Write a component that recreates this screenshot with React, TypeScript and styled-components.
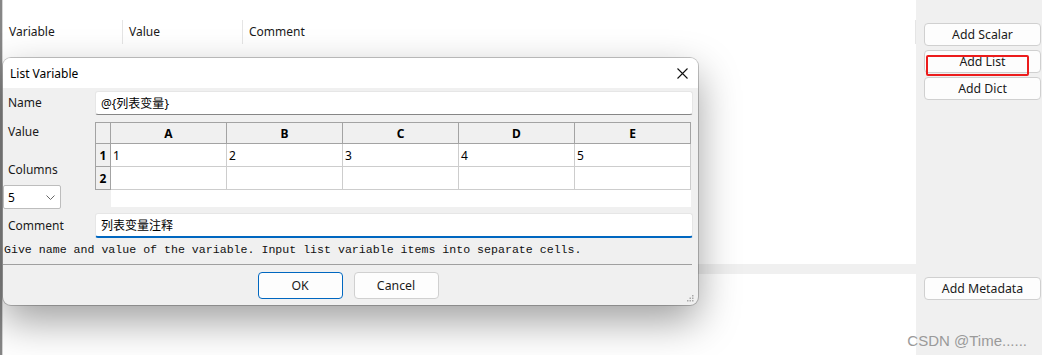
import React from 'react';
import styled, { createGlobalStyle } from 'styled-components';

const GlobalStyle = createGlobalStyle`
  html, body {
    margin: 0;
    padding: 0;
  }
  body {
    width: 1042px;
    height: 355px;
    overflow: hidden;
    font-family: "Noto Sans", "Noto Sans CJK SC", sans-serif;
    font-size: 12px;
    color: #000;
    background: #fff;
  }
  * {
    box-sizing: border-box;
  }
`;

const Window = styled.div`
  position: relative;
  width: 1042px;
  height: 355px;
  padding-left: 3px;
  display: flex;
  flex-direction: column;
  background: #f0f0f0;
  box-shadow: inset 2px 0 #868686, inset 3px 0 #d6d6d6;
  overflow: hidden;
`;

const Section = styled.div<{ $height?: number }>`
  display: flex;
  height: ${({ $height }) => ($height ? `${$height}px` : 'auto')};
  flex: ${({ $height }) => ($height ? 'none' : 1)};
`;

const TableArea = styled.div`
  flex: 1;
  background: #fff;
`;

const Splitter = styled.div`
  flex: none;
  height: 10px;
  background: #f0f0f0;
`;

const HeaderRow = styled.div`
  display: flex;
  height: 24px;
  margin-top: 20px;
`;

const HeaderCell = styled.div<{ $width?: number }>`
  width: ${({ $width }) => ($width ? `${$width}px` : 'auto')};
  flex: ${({ $width }) => ($width ? 'none' : 1)};
  padding-left: 6px;
  line-height: 24px;
  border-right: 1px solid #e5e5e5;
  color: #1a1a1a;
`;

const SidePanel = styled.div<{ $top: number }>`
  width: 126px;
  flex: none;
  padding: ${({ $top }) => $top}px 1px 0 8px;
  display: flex;
  flex-direction: column;
  gap: 4px;
  background: #f0f0f0;
`;

const SideButton = styled.div`
  position: relative;
  height: 23px;
  display: flex;
  align-items: center;
  justify-content: center;
  background: #fdfdfd;
  border: 1px solid #d0d0d0;
  border-radius: 4px;
  color: #1a1a1a;
  font-size: 12.3px;
`;

const Highlight = styled.div`
  position: absolute;
  left: 1px;
  top: 4px;
  width: 103px;
  height: 21px;
  border: 2px solid #ec1c1c;
  border-radius: 2px;
`;

const Dialog = styled.div`
  position: absolute;
  left: 3px;
  top: 58px;
  width: 695px;
  height: 247px;
  display: flex;
  flex-direction: column;
  background: #f0f0f0;
  border-radius: 8px;
  overflow: hidden;
  box-shadow: 0 0 0 1px rgba(0, 0, 0, 0.22), 0 16px 40px rgba(0, 0, 0, 0.38);
`;

const TitleBar = styled.div`
  height: 30px;
  flex: none;
  display: flex;
  align-items: center;
  justify-content: space-between;
  padding: 0 10px 0 7px;
  background: #fff;
`;

const Body = styled.div`
  position: relative;
  flex: 1;
  display: flex;
  flex-direction: column;
  padding: 3px 5px 0 0;
`;

const FormRow = styled.div<{ $gap?: number }>`
  display: flex;
  align-items: center;
  margin-top: ${({ $gap }) => $gap ?? 0}px;
`;

const Label = styled.div`
  width: 92px;
  flex: none;
  padding-left: 5px;
  line-height: 20px;
  color: #1a1a1a;
`;

const TextInput = styled.div<{ $focused?: boolean }>`
  flex: 1;
  height: ${({ $focused }) => ($focused ? 25 : 24)}px;
  display: flex;
  align-items: center;
  padding-left: 5px;
  background: #fff;
  border: 1px solid #e6e6e6;
  border-bottom: ${({ $focused }) => ($focused ? '2px solid #0067c0' : '1px solid #868686')};
  border-radius: 3px;
`;

const ValueRow = styled.div`
  display: flex;
  margin-top: 7px;
  height: 87px;
`;

const LeftColumn = styled.div`
  width: 92px;
  flex: none;
  display: flex;
  flex-direction: column;
  justify-content: space-between;
`;

const ColumnsBlock = styled.div`
  display: flex;
  flex-direction: column;
  gap: 5px;
`;

const Combo = styled.div`
  width: 58px;
  height: 24px;
  display: flex;
  align-items: center;
  justify-content: space-between;
  padding: 0 5px 0 4px;
  background: #fff;
  border: 1px solid #bdbdbd;
  border-radius: 2px;
`;

const Sheet = styled.div`
  display: grid;
  grid-template-columns: 16px repeat(5, 116px);
  grid-template-rows: 22px 23px 23px 17px;
  align-self: flex-start;
`;

const Cell = styled.div<{ $head?: boolean; $first?: boolean; $top?: boolean }>`
  display: flex;
  align-items: center;
  justify-content: ${({ $head }) => ($head ? 'center' : 'flex-start')};
  padding-left: ${({ $head }) => ($head ? 0 : 2)}px;
  background: ${({ $head }) => ($head ? '#f0f0f0' : '#fff')};
  font-weight: ${({ $head }) => ($head ? 700 : 400)};
  border-right: 1px solid ${({ $head }) => ($head ? '#a3a3a3' : '#cdcdcd')};
  border-bottom: 1px solid ${({ $head }) => ($head ? '#a3a3a3' : '#cdcdcd')};
  border-left: ${({ $first }) => ($first ? '1px solid #a3a3a3' : 'none')};
  border-top: ${({ $top }) => ($top ? '1px solid #a3a3a3' : 'none')};
`;

const Filler = styled.div`
  grid-column: 2 / 7;
  background: #fff;
`;

const HelpText = styled.div`
  margin-top: 3px;
  padding-left: 1px;
  line-height: 17px;
  font-family: "Liberation Mono", "DejaVu Sans Mono", monospace;
  font-size: 11.6px;
  white-space: nowrap;
  color: #111;
`;

const Separator = styled.div`
  height: 1px;
  margin: 6px 1px 0 0;
  background: #a0a0a0;
`;

const ButtonRow = styled.div`
  display: flex;
  justify-content: center;
  gap: 11px;
  margin-top: 7px;
`;

const DialogButton = styled.div<{ $default?: boolean }>`
  width: 85px;
  height: 27px;
  display: flex;
  align-items: center;
  justify-content: center;
  background: #fdfdfd;
  border: 1px solid ${({ $default }) => ($default ? '#0067c0' : '#d0d0d0')};
  border-radius: 4px;
  color: #1a1a1a;
  font-size: 12.3px;
`;

const Grip = styled.svg`
  position: absolute;
  right: 4px;
  bottom: 3px;
`;

const Watermark = styled.div`
  position: absolute;
  right: 15px;
  bottom: 6px;
  font-family: "Liberation Sans", Arial, sans-serif;
  font-size: 15px;
  color: #9a9a9a;
`;

const columns = ['A', 'B', 'C', 'D', 'E'];
const rows = [['1', '2', '3', '4', '5'], ['', '', '', '', '']];

export default function App() {
  return (
    <>
      <GlobalStyle />
      <Window>
        <Section $height={264}>
          <TableArea>
            <HeaderRow>
              <HeaderCell $width={120}>Variable</HeaderCell>
              <HeaderCell $width={120}>Value</HeaderCell>
              <HeaderCell>Comment</HeaderCell>
            </HeaderRow>
          </TableArea>
          <SidePanel $top={23}>
            <SideButton>Add Scalar</SideButton>
            <SideButton>
              Add List
              <Highlight />
            </SideButton>
            <SideButton>Add Dict</SideButton>
          </SidePanel>
        </Section>
        <Splitter />
        <Section>
          <TableArea />
          <SidePanel $top={3}>
            <SideButton>Add Metadata</SideButton>
          </SidePanel>
        </Section>

        <Dialog>
          <TitleBar>
            <span>List Variable</span>
            <svg width="11" height="11" viewBox="0 0 11 11">
              <path d="M0.5 0.5 L10.5 10.5 M10.5 0.5 L0.5 10.5" stroke="#111" strokeWidth="1.1" />
            </svg>
          </TitleBar>
          <Body>
            <FormRow>
              <Label>Name</Label>
              <TextInput>@{'{'}列表变量{'}'}</TextInput>
            </FormRow>
            <ValueRow>
              <LeftColumn>
                <Label>Value</Label>
                <ColumnsBlock>
                  <Label>Columns</Label>
                  <Combo>
                    <span>5</span>
                    <svg width="9" height="5" viewBox="0 0 9 5">
                      <path d="M0.5 0.5 L4.5 4.5 L8.5 0.5" fill="none" stroke="#666" strokeWidth="1" />
                    </svg>
                  </Combo>
                </ColumnsBlock>
              </LeftColumn>
              <Sheet>
                <Cell $head $first $top />
                {columns.map((c) => (
                  <Cell key={c} $head $top>
                    {c}
                  </Cell>
                ))}
                {rows.map((r, i) => (
                  <React.Fragment key={i}>
                    <Cell $head $first>
                      {i + 1}
                    </Cell>
                    {r.map((v, j) => (
                      <Cell key={j}>{v}</Cell>
                    ))}
                  </React.Fragment>
                ))}
                <div />
                <Filler />
              </Sheet>
            </ValueRow>
            <FormRow $gap={4}>
              <Label>Comment</Label>
              <TextInput $focused>列表变量注释</TextInput>
            </FormRow>
            <HelpText>
              Give name and value of the variable. Input list variable items into separate cells.
            </HelpText>
            <Separator />
            <ButtonRow>
              <DialogButton $default>OK</DialogButton>
              <DialogButton>Cancel</DialogButton>
            </ButtonRow>
            <Grip width="7" height="7" viewBox="0 0 7 7">
              <g fill="#a8a8a8">
                <rect x="5" y="0" width="1.5" height="1.5" />
                <rect x="2.5" y="2.5" width="1.5" height="1.5" />
                <rect x="5" y="2.5" width="1.5" height="1.5" />
                <rect x="0" y="5" width="1.5" height="1.5" />
                <rect x="2.5" y="5" width="1.5" height="1.5" />
                <rect x="5" y="5" width="1.5" height="1.5" />
              </g>
            </Grip>
          </Body>
        </Dialog>
        <Watermark>CSDN @Time......</Watermark>
      </Window>
    </>
  );
}
